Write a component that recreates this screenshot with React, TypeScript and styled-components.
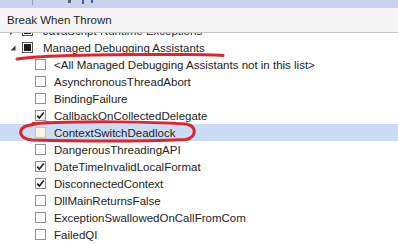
import React from "react";
import styled, { createGlobalStyle } from "styled-components";

const Global = createGlobalStyle`
  html, body { margin: 0; padding: 0; background: #ffffff; }
  body { font-family: "Liberation Sans", Arial, sans-serif; }
`;

const Frame = styled.div`
  position: relative;
  width: 398px;
  height: 245px;
  overflow: hidden;
  display: flex;
  flex-direction: column;
  background: #ffffff;
`;

const TopStrip = styled.div`
  height: 8px;
  flex: none;
  background: #cbd3ec;
  display: flex;
  align-items: flex-start;
`;

const StripMark = styled.span<{ $x: number; $w: number; $h: number; $c: string }>`
  margin-left: ${(p) => p.$x}px;
  width: ${(p) => p.$w}px;
  height: ${(p) => p.$h}px;
  background: ${(p) => p.$c};
  flex: none;
`;

const Header = styled.div`
  height: 24px;
  flex: none;
  background: #f5f5f5;
  border-bottom: 1px solid #c4c4c4;
  display: flex;
  align-items: center;
  padding-left: 7px;
  font-size: 11.5px;
  color: #1e1e1e;
`;

const Viewport = styled.div`
  flex: 1;
  overflow: hidden;
`;

const List = styled.div<{ $scroll: number }>`
  margin-top: ${(p) => -p.$scroll}px;
  display: flex;
  flex-direction: column;
`;

const Row = styled.div<{ $level: number; $selected?: boolean }>`
  height: 17px;
  display: flex;
  align-items: center;
  padding-left: ${(p) => (p.$level === 0 ? 9 : 35)}px;
  background: ${(p) => (p.$selected ? "#cbdcf6" : "transparent")};
  font-size: 11.5px;
  color: #1e1e1e;
  white-space: nowrap;
`;

const Expander = styled.span`
  width: 13px;
  height: 17px;
  flex: none;
  display: flex;
  align-items: center;
`;

const Box = styled.span<{ $focus?: boolean; $strong?: boolean }>`
  width: 11px;
  height: 11px;
  box-sizing: border-box;
  flex: none;
  border: 1px solid ${(p) => (p.$focus ? "#d2c39a" : p.$strong ? "#555" : "#8f8f8f")};
  background: ${(p) => (p.$focus ? "#fdf6df" : "#fff")};
  display: flex;
  align-items: center;
  justify-content: center;
`;

const Fill = styled.span`
  width: 7px;
  height: 7px;
  background: #1c1c1c;
`;

const Label = styled.span<{ $level: number }>`
  margin-left: ${(p) => (p.$level === 0 ? 10 : 8)}px;
`;

const Overlay = styled.svg`
  position: absolute;
  left: 0;
  top: 0;
  pointer-events: none;
`;

type State = "none" | "checked" | "partial";

interface Item {
  label: string;
  level: number;
  state: State;
  expander?: "open" | "closed";
  selected?: boolean;
}

const items: Item[] = [
  { label: "JavaScript Runtime Exceptions", level: 0, state: "partial", expander: "closed" },
  { label: "Managed Debugging Assistants", level: 0, state: "partial", expander: "open" },
  { label: "<All Managed Debugging Assistants not in this list>", level: 1, state: "none" },
  { label: "AsynchronousThreadAbort", level: 1, state: "none" },
  { label: "BindingFailure", level: 1, state: "none" },
  { label: "CallbackOnCollectedDelegate", level: 1, state: "checked" },
  { label: "ContextSwitchDeadlock", level: 1, state: "none", selected: true },
  { label: "DangerousThreadingAPI", level: 1, state: "none" },
  { label: "DateTimeInvalidLocalFormat", level: 1, state: "checked" },
  { label: "DisconnectedContext", level: 1, state: "checked" },
  { label: "DllMainReturnsFalse", level: 1, state: "none" },
  { label: "ExceptionSwallowedOnCallFromCom", level: 1, state: "none" },
  { label: "FailedQI", level: 1, state: "none" },
];

const Arrow = ({ kind }: { kind: "open" | "closed" }) =>
  kind === "open" ? (
    <svg width="6" height="6" viewBox="0 0 6 6" style={{ marginLeft: 1 }}>
      <path d="M5.5 0.5 L5.5 5.5 L0.5 5.5 Z" fill="#3c3c3c" />
    </svg>
  ) : (
    <svg width="5" height="8" viewBox="0 0 5 8" style={{ marginLeft: 1 }}>
      <path d="M0.5 0.5 L4.5 4 L0.5 7.5 Z" fill="none" stroke="#5a5a5a" strokeWidth="1" />
    </svg>
  );

const Check = () => (
  <svg width="9" height="9" viewBox="0 0 9 9">
    <path d="M1.2 4.6 L3.4 7 L7.8 1.6" fill="none" stroke="#1c1c1c" strokeWidth="1.6" />
  </svg>
);

export default function App() {
  return (
    <>
      <Global />
      <Frame>
        <TopStrip>
          <StripMark $x={32} $w={1} $h={5} $c="#9aa0b4" />
          <StripMark $x={35} $w={3} $h={3} $c="#5e6270" />
          <StripMark $x={11} $w={2} $h={4} $c="#3d5fa8" />
          <StripMark $x={7} $w={2} $h={3} $c="#3d5fa8" />
        </TopStrip>
        <Header>Break When Thrown</Header>
        <Viewport>
          <List $scroll={11}>
            {items.map((it) => (
              <Row key={it.label} $level={it.level} $selected={it.selected}>
                {it.level === 0 && <Expander>{it.expander && <Arrow kind={it.expander} />}</Expander>}
                <Box $focus={it.selected} $strong={it.state === "partial"}>
                  {it.state === "partial" && <Fill />}
                  {it.state === "checked" && <Check />}
                </Box>
                <Label $level={it.level}>{it.label}</Label>
              </Row>
            ))}
          </List>
        </Viewport>
        <Overlay width="398" height="245" viewBox="0 0 398 245">
          <path
            d="M17 59 C 40 55.5, 90 54.5, 150 54.5 S 210 54, 223 55.5"
            fill="none"
            stroke="#e1232b"
            strokeWidth="3"
            strokeLinecap="round"
          />
          <path
            d="M33 123.5 C 80 121, 150 121.5, 186 124 C 197 126, 197 137, 186 139.5 C 140 141.5, 70 141, 32 140 C 20 139, 18 131, 24 127 C 27 125, 40 123, 48 122.5"
            fill="none"
            stroke="#e1232b"
            strokeWidth="3"
            strokeLinecap="round"
          />
        </Overlay>
      </Frame>
    </>
  );
}
